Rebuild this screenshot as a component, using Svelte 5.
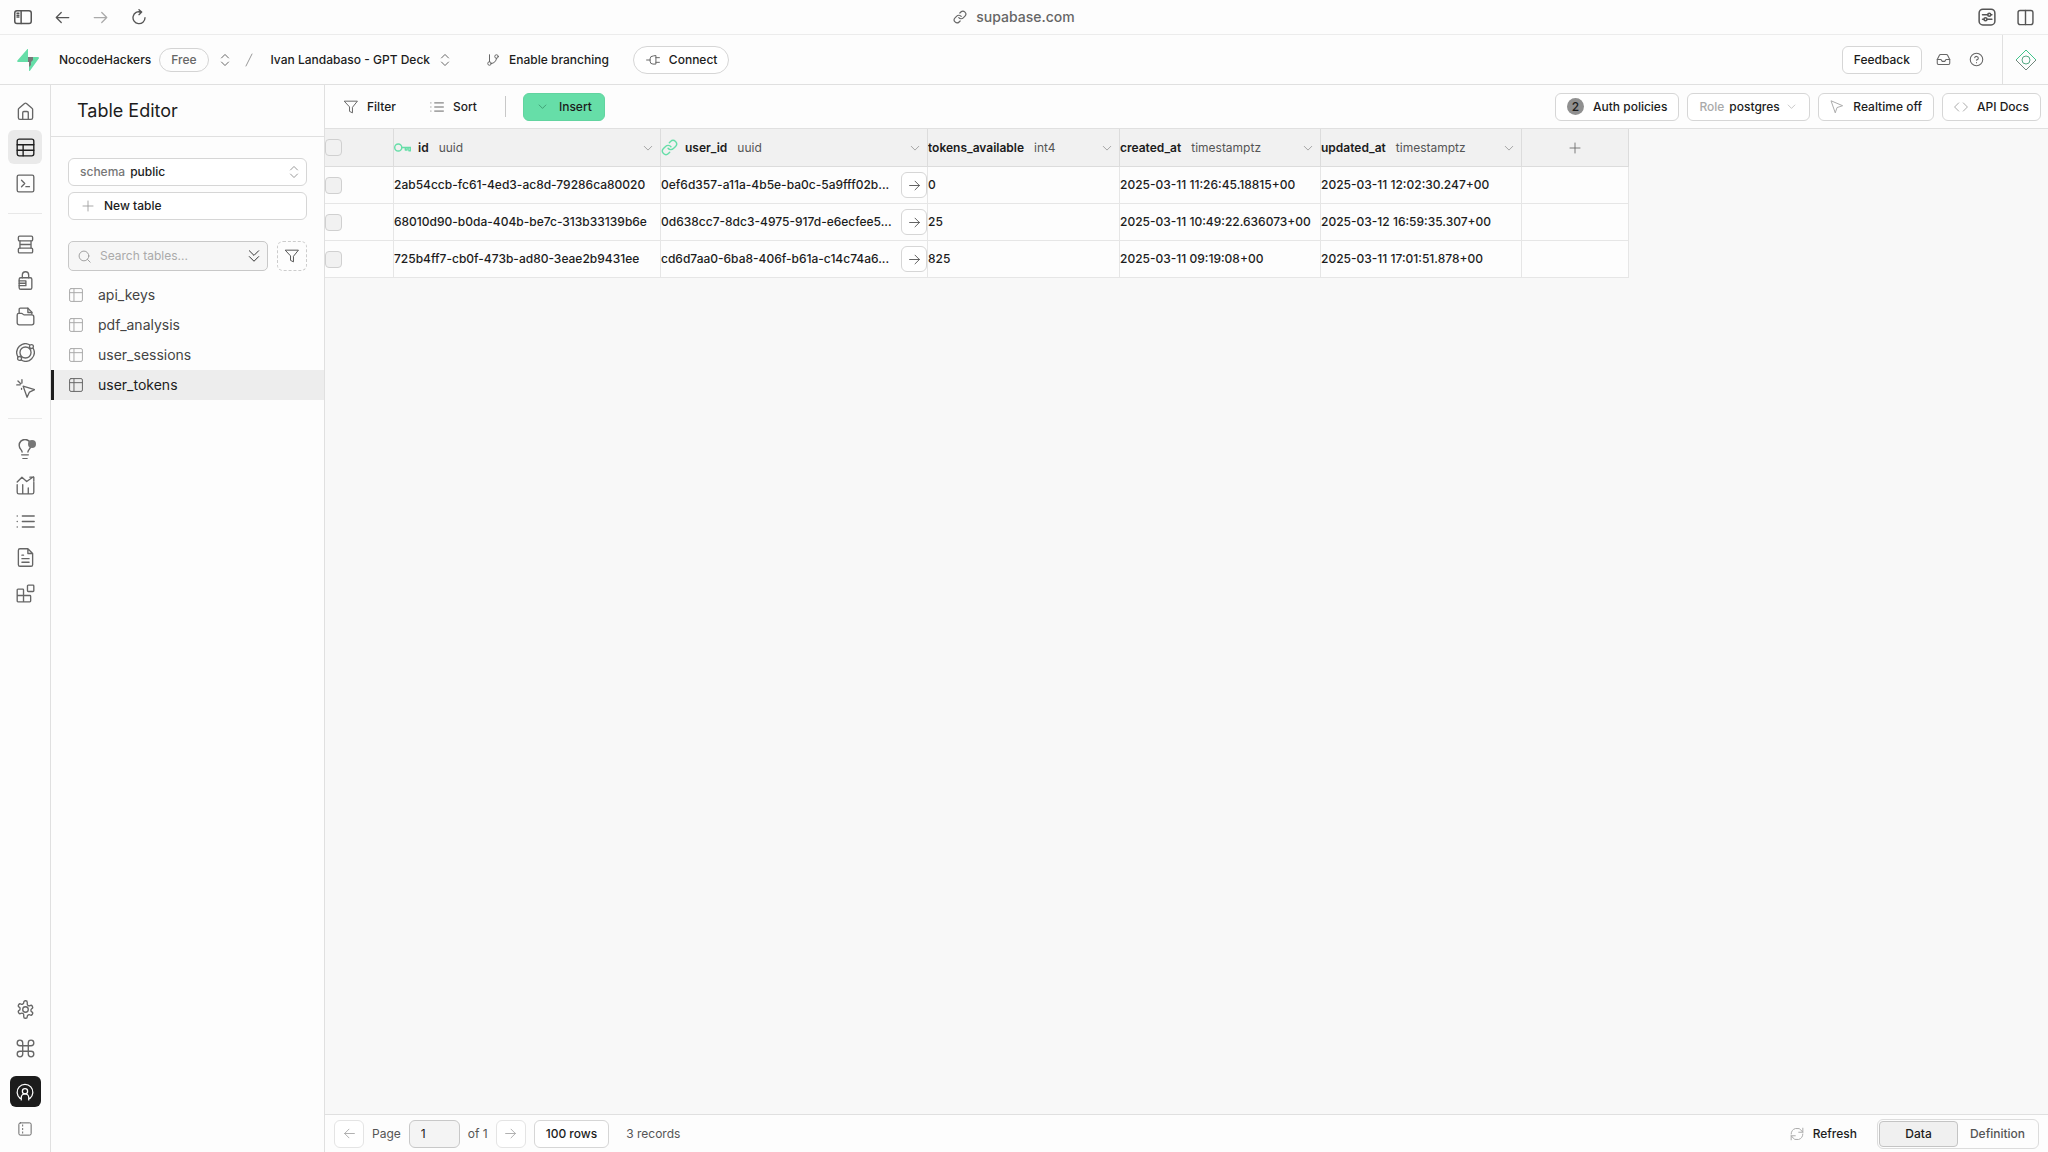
<script lang="ts">
	const icons: Record<string, string> = {
		back: '<path d="M22 12H2M10 4l-8 8 8 8"/>',
		forward: '<path d="M2 12h20M14 4l8 8-8 8"/>',
		reload: '<path d="M15 4.500A9 9 0 1 0 21 13M15 4.500h-3M12 1l4 3.500L12 8.500"/>',
		browserSidebar: '<rect x="1" y="3.500" width="22" height="17" rx="3"/><path d="M9.500 3.500v17M4 7h2.500M4 9.500h2.500M4 12h2.500"/>',
		sliders: '<rect x="1.500" y="1.500" width="21" height="21" rx="5"/><path d="M6 9h7M17 9h1.500M6 15h2M12 15h6.500"/><circle cx="15" cy="9" r="2"/><circle cx="10" cy="15" r="2"/>',
		split: '<rect x="1.500" y="2" width="21" height="20" rx="3"/><path d="M12 2v20"/>',
		link: '<path d="M10 13a5 5 0 0 0 7.540.540l3-3a5 5 0 0 0-7.070-7.070l-1.720 1.710"/><path d="M14 11a5 5 0 0 0-7.540-.540l-3 3a5 5 0 0 0 7.070 7.070l1.710-1.710"/>',
		updown: '<path d="m6 8.500 6-6 6 6M6 15.500l6 6 6-6"/>',
		down: '<path d="m3 8 9 9 9-9"/>',
		doubleDown: '<path d="m4 3 8 8 8-8M4 13l8 8 8-8"/>',
		branch: '<path d="M6 3v12M18 9a9 9 0 0 1-9 9"/><circle cx="18" cy="6" r="3"/><circle cx="6" cy="18" r="3"/>',
		plug: '<path d="M1 12h6M17 8h6M17 16h6M17 5v14h-5a5 5 0 0 1-5-5v-4a5 5 0 0 1 5-5Z"/>',
		inbox: '<path d="M22 12h-6l-2 3h-4l-2-3H2"/><path d="M5.450 5.110 2 12v6a2 2 0 0 0 2 2h16a2 2 0 0 0 2-2v-6l-3.450-6.890A2 2 0 0 0 16.760 4H7.240a2 2 0 0 0-1.790 1.110Z"/>',
		help: '<circle cx="12" cy="12" r="10"/><path d="M9.090 9a3 3 0 0 1 5.830 1c0 2-3 3-3 3M12 17h.010"/>',
		home: '<path d="M3 9.500a2 2 0 0 1 .8-1.600l7-6a2 2 0 0 1 2.400 0l7 6a2 2 0 0 1 .8 1.600V20a2 2 0 0 1-2 2H5a2 2 0 0 1-2-2Z"/><path d="M8.500 22v-8.500a1.500 1.500 0 0 1 1.500-1.500h4a1.500 1.500 0 0 1 1.500 1.500V22"/>',
		editor: '<rect x="1.500" y="1.500" width="21" height="21" rx="2.500"/><path d="M1.500 8.500h21M1.500 15.500h21M9 8.500v14"/>',
		terminal: '<rect x="1.500" y="1.500" width="21" height="21" rx="2"/><path d="m7 8 4 4-4 4M12.500 16H17"/>',
		database: '<rect x="3" y="1.500" width="18" height="6" rx="1.500"/><rect x="3" y="16.500" width="18" height="6" rx="1.500"/><path d="M5 7.500v9M19 7.500v9M5 12h14"/>',
		lock: '<rect x="4" y="8.500" width="16" height="14.500" rx="2"/><path d="M8 8.500V5a4 4 0 0 1 8 0v3.500M4 12.500h8.500v6H4M4 15.500h8.500"/>',
		folder: '<path d="M4 8V3a1.500 1.500 0 0 1 1.500-1.500H15l5 5V9"/><path d="M15 1.500V7h5M1.500 10a2 2 0 0 1 2-2h3.500c1.500 0 2 2 3.500 2H20a2.500 2.500 0 0 1 2.500 2.500V20a2.500 2.500 0 0 1-2.500 2.500H4A2.500 2.500 0 0 1 1.500 20Z"/>',
		edge: '<circle cx="12" cy="12" r="7"/><circle cx="19.500" cy="4.500" r="2.500"/><circle cx="4.500" cy="19.500" r="2.500"/><path d="M17 2.200A11 11 0 0 0 2.200 17M21.800 7A11 11 0 0 1 7 21.800"/>',
		click: '<path d="m9 9 5 14 3-6.500 6.500-3ZM7.500 1v4M1 7.500h4M2.500 2.500l3.500 3.500M7 12v1"/>',
		bulb: '<path d="M15.500 15.500c0-2.500 3.500-3.500 3.500-8a7 7 0 0 0-14 0c0 4.500 3.500 5.500 3.500 8M8 19h8M9.500 23.500h5"/>',
		reports: '<path d="M1.500 11v9.500a2 2 0 0 0 2 2h17a2 2 0 0 0 2-2V8M8.500 11v11.500M15.500 15v7.500M1.500 7.500l6-6 6 5.500 8.500-6M17.500 1.500h5v5"/>',
		list: '<path d="M8 5h15M8 12h15M8 19h15M1.500 5h.1M1.500 12h.1M1.500 19h.1"/>',
		docs: '<path d="M15 1H5a2 2 0 0 0-2 2v18a2 2 0 0 0 2 2h14a2 2 0 0 0 2-2V7ZM15 1v6h6M7.500 9h2M7.500 13.500h9M7.500 18h9"/>',
		blocks: '<rect x="14.500" y="1.500" width="8" height="8" rx="1"/><path d="M9.500 22.500v-15a1 1 0 0 0-1-1h-6a1 1 0 0 0-1 1v14a1 1 0 0 0 1 1h15a1 1 0 0 0 1-1v-6a1 1 0 0 0-1-1h-16"/>',
		settings: '<path d="M12.220 1h-.440a2 2 0 0 0-2 2v.180a2 2 0 0 1-1 1.730l-.430.250a2 2 0 0 1-2 0l-.150-.080a2 2 0 0 0-2.730.730l-.220.380a2 2 0 0 0 .730 2.730l.150.100a2 2 0 0 1 1 1.720v.510a2 2 0 0 1-1 1.740l-.150.090a2 2 0 0 0-.730 2.730l.220.380a2 2 0 0 0 2.730.730l.150-.080a2 2 0 0 1 2 0l.430.250a2 2 0 0 1 1 1.730V21a2 2 0 0 0 2 2h.440a2 2 0 0 0 2-2v-.180a2 2 0 0 1 1-1.730l.430-.250a2 2 0 0 1 2 0l.150.080a2 2 0 0 0 2.730-.730l.220-.390a2 2 0 0 0-.730-2.730l-.150-.080a2 2 0 0 1-1-1.740v-.500a2 2 0 0 1 1-1.740l.150-.090a2 2 0 0 0 .730-2.730l-.220-.380a2 2 0 0 0-2.730-.730l-.150.080a2 2 0 0 1-2 0l-.430-.250a2 2 0 0 1-1-1.730V3a2 2 0 0 0-2-2Z"/><circle cx="12" cy="12" r="3.500"/>',
		command: '<path d="M15.500 5v14a3.500 3.500 0 1 0 3.500-3.500H5A3.500 3.500 0 1 0 8.500 19V5A3.500 3.500 0 1 0 5 8.500h14A3.500 3.500 0 1 0 15.500 5"/>',
		person: '<circle cx="12" cy="11" r="3.500"/><path d="M5.500 20.500A10.500 10.500 0 1 1 18.500 20.500M7 22.500v-3a5 5 0 0 1 10 0v3"/>',
		collapse: '<rect x="1.500" y="1.500" width="21" height="21" rx="2.500"/><path d="M8 5v2M8 11v2M8 17v2"/>',
		plus: '<path d="M12 2v20M2 12h20"/>',
		search: '<circle cx="11" cy="11" r="9"/><path d="m22.500 22.500-5-5"/>',
		filter: '<path d="M1 2h22l-8.500 10.500V22L9.500 19.500v-7Z"/>',
		table: '<rect x="1" y="1" width="22" height="22" rx="2.500"/><path d="M1 8h22M8.500 1v22"/>',
		pointer: '<path d="M2 2l7 20 3-9 9-3Z"/>',
		code: '<path d="m16 19 7-7-7-7M8 5l-7 7 7 7"/>',
		arrow: '<path d="M3 12h18M13 4l8 8-8 8"/>',
		arrowLeft: '<path d="M21 12H3M11 4l-8 8 8 8"/>',
		refresh: '<path d="M2 12A10 10 0 0 1 20.500 7L22 9M22 2v7h-7M22 12A10 10 0 0 1 3.500 17L2 15M2 22v-7h7"/>',
		key: '<circle cx="6" cy="12" r="5"/><path d="M11 12h12.500v4.500h-2.500V12M16 12v3.500h2.500V12"/>'
	};

	const navGroups = [
		['home', 'editor', 'terminal'],
		['database', 'lock', 'folder', 'edge', 'click'],
		['bulb', 'reports', 'list', 'docs', 'blocks']
	];

	const tables = ['api_keys', 'pdf_analysis', 'user_sessions', 'user_tokens'];
	let activeTable = $state('user_tokens');

	const columns = [
		{ name: 'id', type: 'uuid', icon: 'key' },
		{ name: 'user_id', type: 'uuid', icon: 'link' },
		{ name: 'tokens_available', type: 'int4', icon: '' },
		{ name: 'created_at', type: 'timestamptz', icon: '' },
		{ name: 'updated_at', type: 'timestamptz', icon: '' }
	];

	const rows = [
		['2ab54ccb-fc61-4ed3-ac8d-79286ca80020', '0ef6d357-a11a-4b5e-ba0c-5a9fff02b...', '0', '2025-03-11 11:26:45.18815+00', '2025-03-11 12:02:30.247+00'],
		['68010d90-b0da-404b-be7c-313b33139b6e', '0d638cc7-8dc3-4975-917d-e6ecfee5...', '25', '2025-03-11 10:49:22.636073+00', '2025-03-12 16:59:35.307+00'],
		['725b4ff7-cb0f-473b-ad80-3eae2b9431ee', 'cd6d7aa0-6ba8-406f-b61a-c14c74a6...', '825', '2025-03-11 09:19:08+00', '2025-03-11 17:01:51.878+00']
	];

	let view = $state('Data');
	let page = $state('1');
	let search = $state('');
</script>

{#snippet icon(name: string, size = 14)}
	<svg class="icon" width={size} height={size} viewBox="0 0 24 24" aria-hidden="true">{@html icons[name]}</svg>
{/snippet}

<div class="app">
	<div class="browser">
		<div class="browser-side">
			<button aria-label="Toggle sidebar">{@render icon('browserSidebar', 18)}</button>
			<button aria-label="Back">{@render icon('back', 15)}</button>
			<button aria-label="Forward" disabled>{@render icon('forward', 15)}</button>
			<button aria-label="Reload">{@render icon('reload', 16)}</button>
		</div>
		<div class="address">{@render icon('link', 14)}<span>supabase.com</span></div>
		<div class="browser-side right">
			<button aria-label="Page settings">{@render icon('sliders', 18)}</button>
			<button aria-label="Split view">{@render icon('split', 17)}</button>
		</div>
	</div>

	<header>
		<a class="logo" href="/" aria-label="Supabase">
			<svg width="22" height="22" viewBox="0 0 22 22">
				<path fill="#66dea8" d="M11 .5V13H1C0 13 0 12 .6 11.300L10 .4c.4-.5 1-.3 1 .1Z" />
				<path fill="#66dea8" d="M12 21.500V8h9c1 0 1.300 1 .6 1.800L13 21.700c-.4.500-1 .3-1-.2Z" />
				<path fill="#777" d="M11 8h5v3l-2 2v3l-2 2v-5h-1Z" />
			</svg>
		</a>
		<a class="crumb" href="/org">NocodeHackers</a>
		<span class="pill">Free</span>
		<button class="switch" aria-label="Switch organization">{@render icon('updown', 14)}</button>
		<svg class="slash icon" width="10" height="14" viewBox="0 0 10 14"><path d="M8 1 2 13" /></svg>
		<a class="crumb" href="/project">Ivan Landabaso - GPT Deck</a>
		<button class="switch" aria-label="Switch project">{@render icon('updown', 14)}</button>
		<button class="branching">{@render icon('branch')}Enable branching</button>
		<button class="btn round">{@render icon('plug')}Connect</button>
		<div class="header-right">
			<button class="btn">Feedback</button>
			<button aria-label="Inbox">{@render icon('inbox', 15)}</button>
			<button aria-label="Help">{@render icon('help', 15)}</button>
			<button class="assistant" aria-label="Assistant">
				<svg width="22" height="22" viewBox="0 0 22 22" fill="none">
					<path stroke="#3fc48a" d="M1 11 11 1l10 10" />
					<path stroke="#71867c" d="m1 11 10 10 10-10" />
					<circle cx="11" cy="11" r="4" stroke="#55a984" />
				</svg>
			</button>
		</div>
	</header>

	<div class="body">
		<nav class="rail" aria-label="Main">
			{#each navGroups as group, i}
				{#if i > 0}<hr />{/if}
				<div class="rail-group">
					{#each group as name}
						<a href="/{name}" class:active={name === 'editor'} aria-label={name}>
							{@render icon(name, name === 'bulb' ? 20 : 19)}
							{#if name === 'bulb'}<span class="dot"></span>{/if}
						</a>
					{/each}
				</div>
			{/each}
			<div class="rail-bottom">
				<a href="/settings" aria-label="Settings">{@render icon('settings', 19)}</a>
				<button aria-label="Commands">{@render icon('command', 19)}</button>
				<button class="account" aria-label="Account">{@render icon('person', 18)}</button>
				<button class="collapse" aria-label="Collapse">{@render icon('collapse', 14)}</button>
			</div>
		</nav>

		<aside>
			<h1>Table Editor</h1>
			<div class="controls">
				<div class="btn schema">
					<label for="schema">schema</label>
					<select id="schema"><option>public</option></select>
					{@render icon('updown', 14)}
				</div>
				<button class="btn new-table">{@render icon('plus', 12)}New table</button>
				<div class="search-row">
					<div class="search">
						{@render icon('search', 13)}
						<input type="text" placeholder="Search tables..." aria-label="Search tables" bind:value={search} />
						<button aria-label="Sort tables">{@render icon('doubleDown', 14)}</button>
					</div>
					<button class="filter-btn" aria-label="Filter tables">{@render icon('filter', 14)}</button>
				</div>
			</div>
			<ul>
				{#each tables as name}
					<li>
						<button class:active={name === activeTable} onclick={() => (activeTable = name)}>
							{@render icon('table', 14)}{name}
						</button>
					</li>
				{/each}
			</ul>
		</aside>

		<main>
			<div class="toolbar">
				<button class="plain">{@render icon('filter')}Filter</button>
				<button class="plain">{@render icon('list')}Sort</button>
				<span class="divider"></span>
				<button class="btn insert">{@render icon('down', 9)}Insert</button>
				<div class="toolbar-right">
					<button class="btn"><span class="count">2</span>Auth policies</button>
					<div class="btn role">
						<label for="role">Role</label>
						<select id="role"><option>postgres</option></select>
						{@render icon('down', 9)}
					</div>
					<button class="btn faint">{@render icon('pointer')}Realtime off</button>
					<button class="btn faint">{@render icon('code')}API Docs</button>
				</div>
			</div>

			<div class="grid">
				<table>
					<colgroup>
						<col class="c-check" />
						<col class="c-uuid" />
						<col class="c-uuid" />
						<col class="c-int" />
						<col class="c-time" />
						<col class="c-time" />
						<col class="c-add" />
					</colgroup>
					<thead>
						<tr>
							<th><input type="checkbox" aria-label="Select all rows" /></th>
							{#each columns as col}
								<th>
									<div class="head">
										{#if col.icon}<span class="kind">{@render icon(col.icon, 17)}</span>{/if}
										{col.name}
										<span class="type">{col.type}</span>
										<button aria-label="Column menu">{@render icon('down', 10)}</button>
									</div>
								</th>
							{/each}
							<th class="add"><button aria-label="Add column">{@render icon('plus', 12)}</button></th>
						</tr>
					</thead>
					<tbody>
						{#each rows as row}
							<tr>
								<td><input type="checkbox" aria-label="Select row" /></td>
								{#each row as cell, i}
									<td>
										{#if i === 1}
											<div class="ref">
												<span>{cell}</span>
												<button aria-label="View referencing record">{@render icon('arrow', 13)}</button>
											</div>
										{:else}
											{cell}
										{/if}
									</td>
								{/each}
								<td></td>
							</tr>
						{/each}
					</tbody>
				</table>
			</div>

			<footer>
				<button class="btn step" aria-label="Previous page" disabled>{@render icon('arrowLeft', 13)}</button>
				<label for="page">Page</label>
				<input id="page" type="text" bind:value={page} />
				<span>of 1</span>
				<button class="btn step" aria-label="Next page" disabled>{@render icon('arrow', 13)}</button>
				<button class="btn">100 rows</button>
				<span class="records">3 records</span>
				<button class="plain refresh">{@render icon('refresh')}Refresh</button>
				<div class="tabs">
					{#each ['Data', 'Definition'] as tab}
						<button class:active={view === tab} onclick={() => (view = tab)}>{tab}</button>
					{/each}
				</div>
			</footer>
		</main>
	</div>
</div>

<style>
	:global(body) {
		margin: 0;
	}
	.app {
		--line: #e0e0e0;
		--green: #66dea8;
		display: flex;
		flex-direction: column;
		height: 100vh;
		background: #fdfdfd;
		color: #1c1c1c;
		font: 500 12px/20px Inter, "Liberation Sans", sans-serif;
	}
	* {
		box-sizing: border-box;
	}
	button,
	input,
	select {
		font: inherit;
		color: inherit;
		margin: 0;
		padding: 0;
		border: 0;
		background: none;
	}
	button {
		display: flex;
		align-items: center;
		white-space: nowrap;
	}
	a {
		color: inherit;
		text-decoration: none;
	}
	select {
		appearance: none;
	}
	.icon {
		display: block;
		flex: none;
		fill: none;
		stroke: currentColor;
		stroke-width: 1.7;
		stroke-linecap: round;
		stroke-linejoin: round;
	}

	/* browser bar */
	.browser {
		display: flex;
		align-items: center;
		height: 35px;
		padding: 0 14px;
		border-bottom: 1px solid #ececec;
		color: #555;
	}
	.browser-side {
		display: flex;
		align-items: center;
		flex: 1;
		gap: 23px;
	}
	.browser-side .icon,
	.address .icon,
	.kind .icon {
		stroke-width: 2;
	}
	.browser-side button:disabled {
		color: #aaa;
	}
	.browser-side.right {
		justify-content: flex-end;
		gap: 21px;
	}
	.address {
		display: flex;
		align-items: center;
		gap: 9px;
		margin-right: 20px;
		font-size: 14px;
		color: #666;
	}

	/* project header */
	header {
		display: flex;
		align-items: center;
		height: 50px;
		flex: none;
		padding-left: 17px;
		border-bottom: 1px solid var(--line);
	}
	.logo {
		display: flex;
		margin-right: 20px;
	}
	.crumb {
		white-space: nowrap;
	}
	.pill {
		margin: 0 1px 0 8px;
		padding: 0 11px;
		border: 1px solid #d4d4d4;
		border-radius: 12px;
		line-height: 22px;
		color: #666;
	}
	.switch {
		color: #666;
		padding: 0 8px;
	}
	.slash {
		margin: 0 17px 0 4px;
		color: #999;
		stroke-width: 1;
	}
	.branching {
		gap: 9px;
		margin: 0 24px 0 26px;
	}
	.branching .icon,
	.btn .icon,
	.plain .icon {
		color: #666;
	}
	.btn {
		display: flex;
		align-items: center;
		gap: 9px;
		height: 28px;
		padding: 0 11px;
		border: 1px solid #d6d6d6;
		border-radius: 6px;
		background: #fff;
		white-space: nowrap;
	}
	.btn.round {
		border-radius: 14px;
		padding: 0 11px 0 12px;
	}
	.header-right {
		display: flex;
		align-items: center;
		align-self: stretch;
		gap: 18px;
		margin-left: auto;
		color: #666;
	}
	.header-right .btn {
		color: #1c1c1c;
		margin-right: -4px;
	}
	.assistant {
		align-self: stretch;
		justify-content: center;
		width: 46px;
		border-left: 1px solid var(--line);
	}

	.body {
		display: flex;
		flex: 1;
		min-height: 0;
	}

	/* icon rail */
	.rail {
		display: flex;
		flex-direction: column;
		align-items: center;
		width: 51px;
		flex: none;
		padding: 9px 0 6px;
		border-right: 1px solid var(--line);
		color: #666;
	}
	.rail-group {
		display: flex;
		flex-direction: column;
		gap: 2px;
	}
	.rail-group a,
	.rail-bottom > * {
		position: relative;
		display: flex;
		align-items: center;
		justify-content: center;
		width: 34px;
		height: 34px;
		border-radius: 6px;
	}
	.rail-group a.active {
		background: #eaeaea;
		color: #1c1c1c;
	}
	.rail hr {
		width: 34px;
		margin: 13px 0;
		border: 0;
		border-top: 1px solid #e8e8e8;
	}
	.dot {
		position: absolute;
		top: 8px;
		right: 6px;
		width: 8px;
		height: 8px;
		border-radius: 50%;
		background: #777;
	}
	.rail-bottom {
		display: flex;
		flex-direction: column;
		align-items: center;
		gap: 5px;
		margin-top: auto;
	}
	.rail-bottom .account {
		width: 31px;
		height: 31px;
		margin-top: 6px;
		background: #1c1c1c;
		color: #fff;
	}

	/* table list */
	aside {
		width: 274px;
		flex: none;
		border-right: 1px solid var(--line);
	}
	h1 {
		margin: 0;
		padding: 0 26px;
		border-bottom: 1px solid var(--line);
		font-size: 18px;
		font-weight: 400;
		line-height: 51px;
	}
	.controls {
		display: flex;
		flex-direction: column;
		gap: 6px;
		padding: 21px 17px 9px;
	}
	.schema label {
		color: #777;
	}
	.schema {
		gap: 5px;
		padding-right: 5px;
	}
	.schema select {
		flex: 1;
	}
	.schema .icon,
	.new-table .icon {
		color: #999;
	}
	.new-table {
		gap: 10px;
		padding-left: 13px;
	}
	.search-row {
		display: flex;
		gap: 9px;
		padding-top: 15px;
	}
	.search {
		display: flex;
		align-items: center;
		flex: 1;
		min-width: 0;
		gap: 9px;
		height: 30px;
		padding: 0 6px 0 9px;
		border: 1px solid #c8c8c8;
		border-radius: 5px;
		background: #f6f6f6;
		color: #999;
	}
	.search input {
		flex: 1;
		min-width: 0;
		font-weight: 400;
	}
	.search input::placeholder {
		color: #aaa;
	}
	.search button {
		color: #333;
	}
	.filter-btn {
		justify-content: center;
		width: 30px;
		height: 30px;
		border: 1px dashed #ccc;
		border-radius: 6px;
		color: #555;
	}
	ul {
		margin: 0;
		padding: 0;
		list-style: none;
	}
	li button {
		gap: 15px;
		width: 100%;
		height: 30px;
		padding-left: 15px;
		border-left: 3px solid transparent;
		font-size: 14px;
		font-weight: 400;
		color: #444;
	}
	li button .icon {
		color: #aaa;
	}
	li button.active {
		border-color: #1c1c1c;
		background: #ededed;
		color: #1c1c1c;
	}
	li button.active .icon {
		color: #666;
	}

	/* main */
	main {
		display: flex;
		flex-direction: column;
		flex: 1;
		min-width: 0;
	}
	.toolbar {
		display: flex;
		align-items: center;
		height: 44px;
		padding: 0 7px 0 19px;
		border-bottom: 1px solid var(--line);
	}
	.plain {
		gap: 9px;
		margin-right: 34px;
	}
	.divider {
		width: 1px;
		height: 21px;
		margin-right: 17px;
		margin-left: -6px;
		background: #c8c8c8;
	}
	.insert {
		gap: 12px;
		padding: 0 12px 0 14px;
		border-color: #62d4a0;
		background: var(--green);
	}
	.insert .icon {
		color: #2d7f5b;
	}
	.toolbar-right {
		display: flex;
		gap: 8px;
		margin-left: auto;
	}
	.count {
		width: 17px;
		height: 17px;
		border-radius: 50%;
		background: #909090;
		line-height: 17px;
		text-align: center;
	}
	.role {
		gap: 5px;
		padding-right: 13px;
	}
	.role label,
	.role .icon,
	.faint .icon {
		color: #aaa;
	}
	.role .icon {
		margin-left: 2px;
	}

	.grid {
		flex: 1;
		min-height: 0;
		overflow: auto;
		background: #f8f8f8;
	}
	table {
		width: 1304px;
		table-layout: fixed;
		border-collapse: separate;
		border-spacing: 0;
		background: #fdfdfd;
	}
	.c-check {
		width: 69px;
	}
	.c-uuid {
		width: 267px;
	}
	.c-int {
		width: 192px;
	}
	.c-time {
		width: 201px;
	}
	th,
	td {
		height: 37px;
		padding: 0;
		overflow: hidden;
		border-right: 1px solid #e6e6e6;
		border-bottom: 1px solid #e6e6e6;
		text-align: left;
		white-space: nowrap;
	}
	th {
		height: 38px;
		background: #f1f1f1;
		border-color: #dcdcdc;
		font-weight: 600;
	}
	input[type='checkbox'] {
		display: block;
		appearance: none;
		width: 17px;
		height: 17px;
		border: 1px solid #d0d0d0;
		border-radius: 4px;
		background: #f1f1f1;
	}
	.head {
		display: flex;
		align-items: center;
		padding-right: 7px;
	}
	.kind {
		margin-right: 7px;
		color: var(--green);
	}
	.type {
		margin-left: 10px;
		font-weight: 400;
		color: #555;
	}
	.head button {
		margin-left: auto;
		color: #888;
	}
	.add button {
		margin: 0 auto;
		color: #666;
	}
	.ref {
		display: flex;
		align-items: center;
		justify-content: space-between;
	}
	.ref button {
		justify-content: center;
		flex: none;
		width: 26px;
		height: 26px;
		border: 1px solid #d6d6d6;
		border-radius: 6px;
		background: #fff;
		color: #555;
	}

	/* pagination */
	footer {
		display: flex;
		align-items: center;
		gap: 8px;
		height: 38px;
		padding: 0 9px;
		border-top: 1px solid var(--line);
		color: #555;
		font-weight: 400;
	}
	footer .btn {
		color: #1c1c1c;
		font-weight: 500;
	}
	footer .step {
		justify-content: center;
		width: 30px;
		padding: 0;
		border-color: #e4e4e4;
	}
	footer .step .icon {
		color: #aaa;
	}
	#page {
		width: 51px;
		height: 28px;
		padding: 0 11px;
		border: 1px solid #c8c8c8;
		border-radius: 6px;
		background: #f4f4f4;
		color: #1c1c1c;
	}
	.records {
		margin-left: 9px;
	}
	.refresh {
		margin-left: auto;
		margin-right: 12px;
		color: #1c1c1c;
		font-weight: 500;
	}
	.refresh .icon {
		color: #aaa;
	}
	.tabs {
		display: flex;
		padding: 1px;
		border: 1px solid #dcdcdc;
		border-radius: 6px;
	}
	.tabs button {
		justify-content: center;
		height: 26px;
		min-width: 79px;
		border: 1px solid transparent;
		border-radius: 4px;
		font-weight: 500;
	}
	.tabs .active {
		border-color: #c4c4c4;
		background: #f0f0f0;
		color: #1c1c1c;
	}
</style>
